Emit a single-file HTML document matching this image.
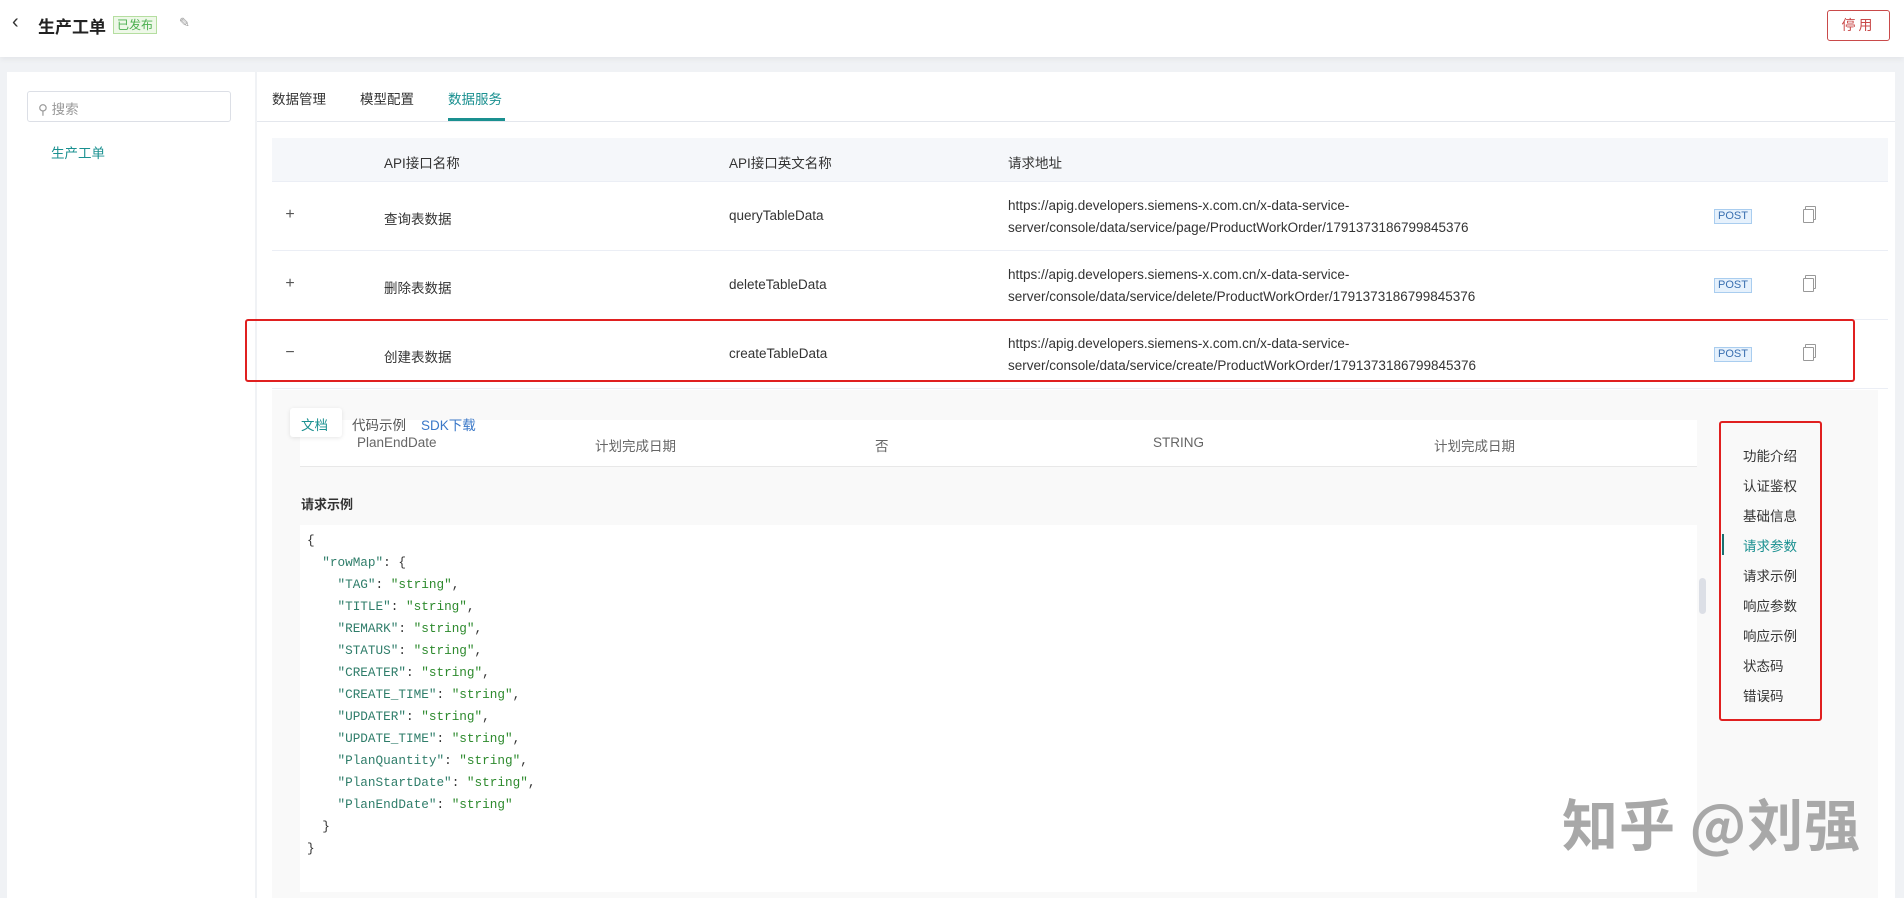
<!DOCTYPE html>
<html><head><meta charset="utf-8"><style>
*{margin:0;padding:0;box-sizing:border-box}
body{width:1904px;height:898px;background:#f0f2f5;font-family:"Liberation Sans","Noto Sans CJK SC",sans-serif;font-size:13.5px;color:#333;position:relative;overflow:hidden}
.abs{position:absolute}
.hdr{left:0;top:0;width:1904px;height:57px;background:#fff;box-shadow:0 2px 6px rgba(0,0,0,.06)}
.left{left:7px;top:72px;width:248px;height:826px;background:#fff}
.main{left:257px;top:72px;width:1638px;height:826px;background:#fff}
.t{white-space:nowrap}
.row{left:272px;width:1616px;height:69px;border-bottom:1px solid #ebeef5;background:#fff}
.plus{left:10px;top:26px;width:16px;height:16px;border-radius:50%;font-size:16px;line-height:14px;text-align:center;color:#555}
.post{position:absolute;left:1442px;top:27px;border:1px solid #a9cdef;background:#e6f1fc;color:#3a6fb0;font-size:11px;padding:0 3px;line-height:13px}
.copy{position:absolute;left:1531px;top:26px;width:11px;height:14px}
.copy:before{content:"";position:absolute;left:2px;top:-2px;width:9px;height:12px;border:1.5px solid #999;border-radius:1px}
.copy:after{content:"";position:absolute;left:0;top:1px;width:9px;height:12px;border:1.5px solid #999;border-radius:1px;background:#fff}
.code{font-family:"Liberation Mono",monospace;font-size:12.7px;line-height:22px;color:#333;white-space:pre}
.k{color:#2f7d6a}.s{color:#2d8a2d}
.nav div{position:absolute;left:22px;font-size:13.5px;white-space:nowrap;color:#333}
</style></head><body>
<div class="abs hdr">
 <div class="abs t" style="left:12px;top:11px;font-size:20px;color:#333">‹</div>
 <div class="abs t" style="left:38px;top:13px;font-size:17px;font-weight:bold;color:#222">生产工单</div>
 <div class="abs t" style="left:113px;top:16px;font-size:12px;color:#4caf50;background:#eef8e8;border:1px solid #b5dea0;padding:0 3px;line-height:16px">已发布</div>
 <div class="abs t" style="left:179px;top:15px;font-size:13px;color:#999">✎</div>
 <div class="abs t" style="left:1827px;top:10px;width:63px;height:31px;border:1px solid #c94a4a;border-radius:3px;color:#c94a4a;font-size:14px;text-align:center;line-height:29px;letter-spacing:3px">停用</div>
</div>
<div class="abs left">
 <div class="abs" style="left:20px;top:19px;width:204px;height:31px;border:1px solid #dcdfe6;border-radius:3px"></div>
 <div class="abs t" style="left:31px;top:26px;color:#999;font-size:13.5px">⚲ 搜索</div>
 <div class="abs t" style="left:44px;top:70px;color:#1a9090;font-size:13.5px">生产工单</div>
</div>
<div class="abs main">
 <div class="abs t" style="left:15px;top:16px">数据管理</div>
 <div class="abs t" style="left:103px;top:16px">模型配置</div>
 <div class="abs t" style="left:191px;top:16px;color:#1a9090">数据服务</div>
 <div class="abs" style="left:191px;top:46px;width:57px;height:3px;background:#1a9090"></div>
 <div class="abs" style="left:0;top:49px;width:1638px;height:1px;background:#e4e7ed"></div>
</div>
<div class="abs" style="left:272px;top:138px;width:1616px;height:44px;background:#f5f7fa;border-bottom:1px solid #ebeef5">
 <div class="abs t" style="left:112px;top:14px">API接口名称</div>
 <div class="abs t" style="left:457px;top:14px">API接口英文名称</div>
 <div class="abs t" style="left:736px;top:14px">请求地址</div>
</div>
<div class="abs row" style="top:182px">
 <div class="abs plus">+</div><div class="abs t" style="left:112px;top:26px">查询表数据</div><div class="abs t" style="left:457px;top:26px">queryTableData</div>
 <div class="abs t" style="left:736px;top:13px;line-height:22px;font-size:13.5px">https://apig.developers.siemens-x.com.cn/x-data-service-<br>server/console/data/service/page/ProductWorkOrder/1791373186799845376</div>
 <span class="post">POST</span><span class="copy"></span>
</div>
<div class="abs row" style="top:251px">
 <div class="abs plus">+</div><div class="abs t" style="left:112px;top:26px">删除表数据</div><div class="abs t" style="left:457px;top:26px">deleteTableData</div>
 <div class="abs t" style="left:736px;top:13px;line-height:22px;font-size:13.5px">https://apig.developers.siemens-x.com.cn/x-data-service-<br>server/console/data/service/delete/ProductWorkOrder/1791373186799845376</div>
 <span class="post">POST</span><span class="copy"></span>
</div>
<div class="abs row" style="top:320px">
 <div class="abs plus">−</div><div class="abs t" style="left:112px;top:26px">创建表数据</div><div class="abs t" style="left:457px;top:26px">createTableData</div>
 <div class="abs t" style="left:736px;top:13px;line-height:22px;font-size:13.5px">https://apig.developers.siemens-x.com.cn/x-data-service-<br>server/console/data/service/create/ProductWorkOrder/1791373186799845376</div>
 <span class="post">POST</span><span class="copy"></span>
</div>
<div class="abs" style="left:245px;top:319px;width:1610px;height:63px;border:2px solid #e02020;border-radius:3px"></div>
<div class="abs" style="left:272px;top:390px;width:1606px;height:508px;background:#f9f9f9"></div>
<div class="abs" style="left:300px;top:420px;width:1397px;height:47px;background:#fff;border-bottom:1px solid #e8e8e8"></div>
<div class="abs t" style="left:357px;top:435px;color:#666">PlanEndDate</div>
<div class="abs t" style="left:595px;top:435px;color:#666">计划完成日期</div>
<div class="abs t" style="left:875px;top:435px;color:#666">否</div>
<div class="abs t" style="left:1153px;top:435px;color:#666">STRING</div>
<div class="abs t" style="left:1434px;top:435px;color:#666">计划完成日期</div>
<div class="abs" style="left:290px;top:408px;width:52px;height:29px;background:#fff;box-shadow:0 1px 4px rgba(0,0,0,.1);border-radius:3px"></div>
<div class="abs t" style="left:301px;top:414px;color:#1a9090">文档</div>
<div class="abs t" style="left:352px;top:414px;color:#555">代码示例</div>
<div class="abs t" style="left:421px;top:414px;color:#3a78c8">SDK下载</div>
<div class="abs t" style="left:301px;top:494px;font-weight:bold;font-size:13px">请求示例</div>
<div class="abs" style="left:300px;top:525px;width:1397px;height:367px;background:#fff"></div>
<div class="abs code" style="left:307px;top:530px">{
  <span class="k">"rowMap"</span>: {
    <span class="k">"TAG"</span>: <span class="s">"string"</span>,
    <span class="k">"TITLE"</span>: <span class="s">"string"</span>,
    <span class="k">"REMARK"</span>: <span class="s">"string"</span>,
    <span class="k">"STATUS"</span>: <span class="s">"string"</span>,
    <span class="k">"CREATER"</span>: <span class="s">"string"</span>,
    <span class="k">"CREATE_TIME"</span>: <span class="s">"string"</span>,
    <span class="k">"UPDATER"</span>: <span class="s">"string"</span>,
    <span class="k">"UPDATE_TIME"</span>: <span class="s">"string"</span>,
    <span class="k">"PlanQuantity"</span>: <span class="s">"string"</span>,
    <span class="k">"PlanStartDate"</span>: <span class="s">"string"</span>,
    <span class="k">"PlanEndDate"</span>: <span class="s">"string"</span>
  }
}</div>
<div class="abs" style="left:1699px;top:578px;width:7px;height:36px;background:#dcdfe6;border-radius:4px"></div>
<div class="abs nav" style="left:1719px;top:421px;width:103px;height:300px;border:2.5px solid #e02020;border-radius:3px">
 <div style="top:22px">功能介绍</div><div style="top:52px">认证鉴权</div><div style="top:82px">基础信息</div>
 <div style="top:112px;color:#1a9090">请求参数</div><div style="top:142px">请求示例</div><div style="top:172px">响应参数</div>
 <div style="top:202px">响应示例</div><div style="top:232px">状态码</div><div style="top:262px">错误码</div>
 <div style="position:absolute;left:1px;top:111px;width:2px;height:21px;background:#1a7070"></div>
</div>
<div class="abs t" style="left:1562px;top:782px;font-size:56px;color:#a8a8a8;font-family:'Noto Sans CJK SC',sans-serif;font-weight:bold;letter-spacing:1px">知乎 @刘强</div>
</body></html>
